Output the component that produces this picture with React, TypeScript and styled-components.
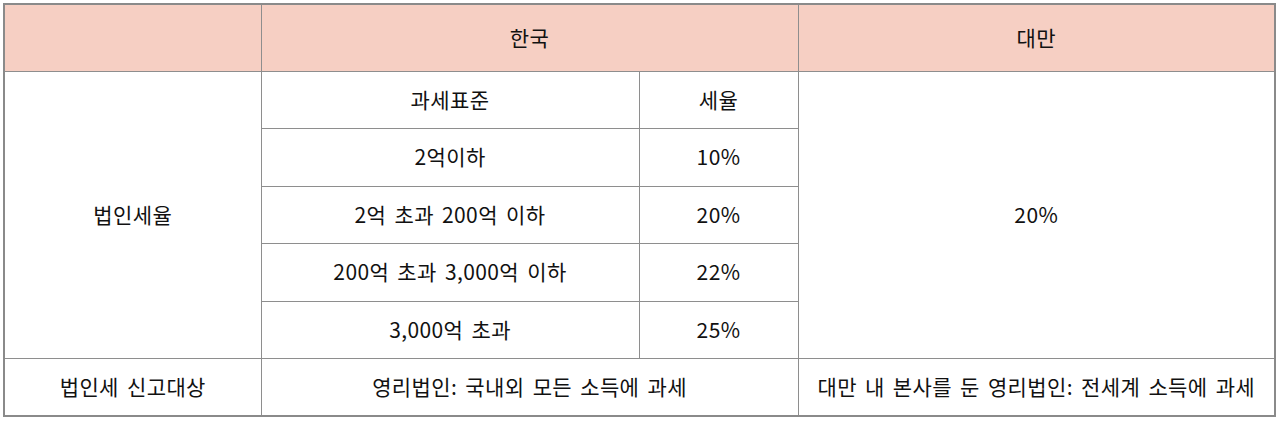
import React from "react";
import styled, { createGlobalStyle } from "styled-components";

const Global = createGlobalStyle`
  html, body { margin: 0; padding: 0; background: #ffffff; }
  body { font-family: "Noto Sans CJK KR", "Noto Sans", sans-serif; color: #111; }
`;

const Page = styled.div`
  padding: 3px 4px 0 3px;
`;

const Table = styled.table`
  width: 1271px;
  border-collapse: collapse;
  table-layout: fixed;
  border: 2px solid #8a8a8a;
`;

const Cell = styled.td<{ $head?: boolean }>`
  border: 1px solid #8e8e8e;
  background: ${(p) => (p.$head ? "#f6cfc3" : "#ffffff")};
  text-align: center;
  vertical-align: middle;
  font-size: 21px;
  font-weight: 400;
  letter-spacing: 0.4px;
  word-spacing: 3px;
  padding: 0 0 2px 0;
  white-space: nowrap;
`;

const Row = styled.tr<{ $h: number }>`
  height: ${(p) => p.$h}px;
`;

const rates: [string, string, number][] = [
  ["2억이하", "10%", 58],
  ["2억 초과 200억 이하", "20%", 57],
  ["200억 초과 3,000억 이하", "22%", 58],
  ["3,000억 초과", "25%", 57],
];

export default function App() {
  return (
    <>
      <Global />
      <Page>
        <Table>
          <colgroup>
            <col style={{ width: 257 }} />
            <col style={{ width: 378 }} />
            <col style={{ width: 159 }} />
            <col style={{ width: 477 }} />
          </colgroup>
          <tbody>
            <Row $h={67}>
              <Cell $head />
              <Cell $head colSpan={2}>한국</Cell>
              <Cell $head>대만</Cell>
            </Row>
            <Row $h={57}>
              <Cell rowSpan={5}>법인세율</Cell>
              <Cell>과세표준</Cell>
              <Cell>세율</Cell>
              <Cell rowSpan={5}>20%</Cell>
            </Row>
            {rates.map(([a, b, h]) => (
              <Row $h={h} key={a}>
                <Cell>{a}</Cell>
                <Cell>{b}</Cell>
              </Row>
            ))}
            <Row $h={58}>
              <Cell>법인세 신고대상</Cell>
              <Cell colSpan={2}>영리법인: 국내외 모든 소득에 과세</Cell>
              <Cell>대만 내 본사를 둔 영리법인: 전세계 소득에 과세</Cell>
            </Row>
          </tbody>
        </Table>
      </Page>
    </>
  );
}
